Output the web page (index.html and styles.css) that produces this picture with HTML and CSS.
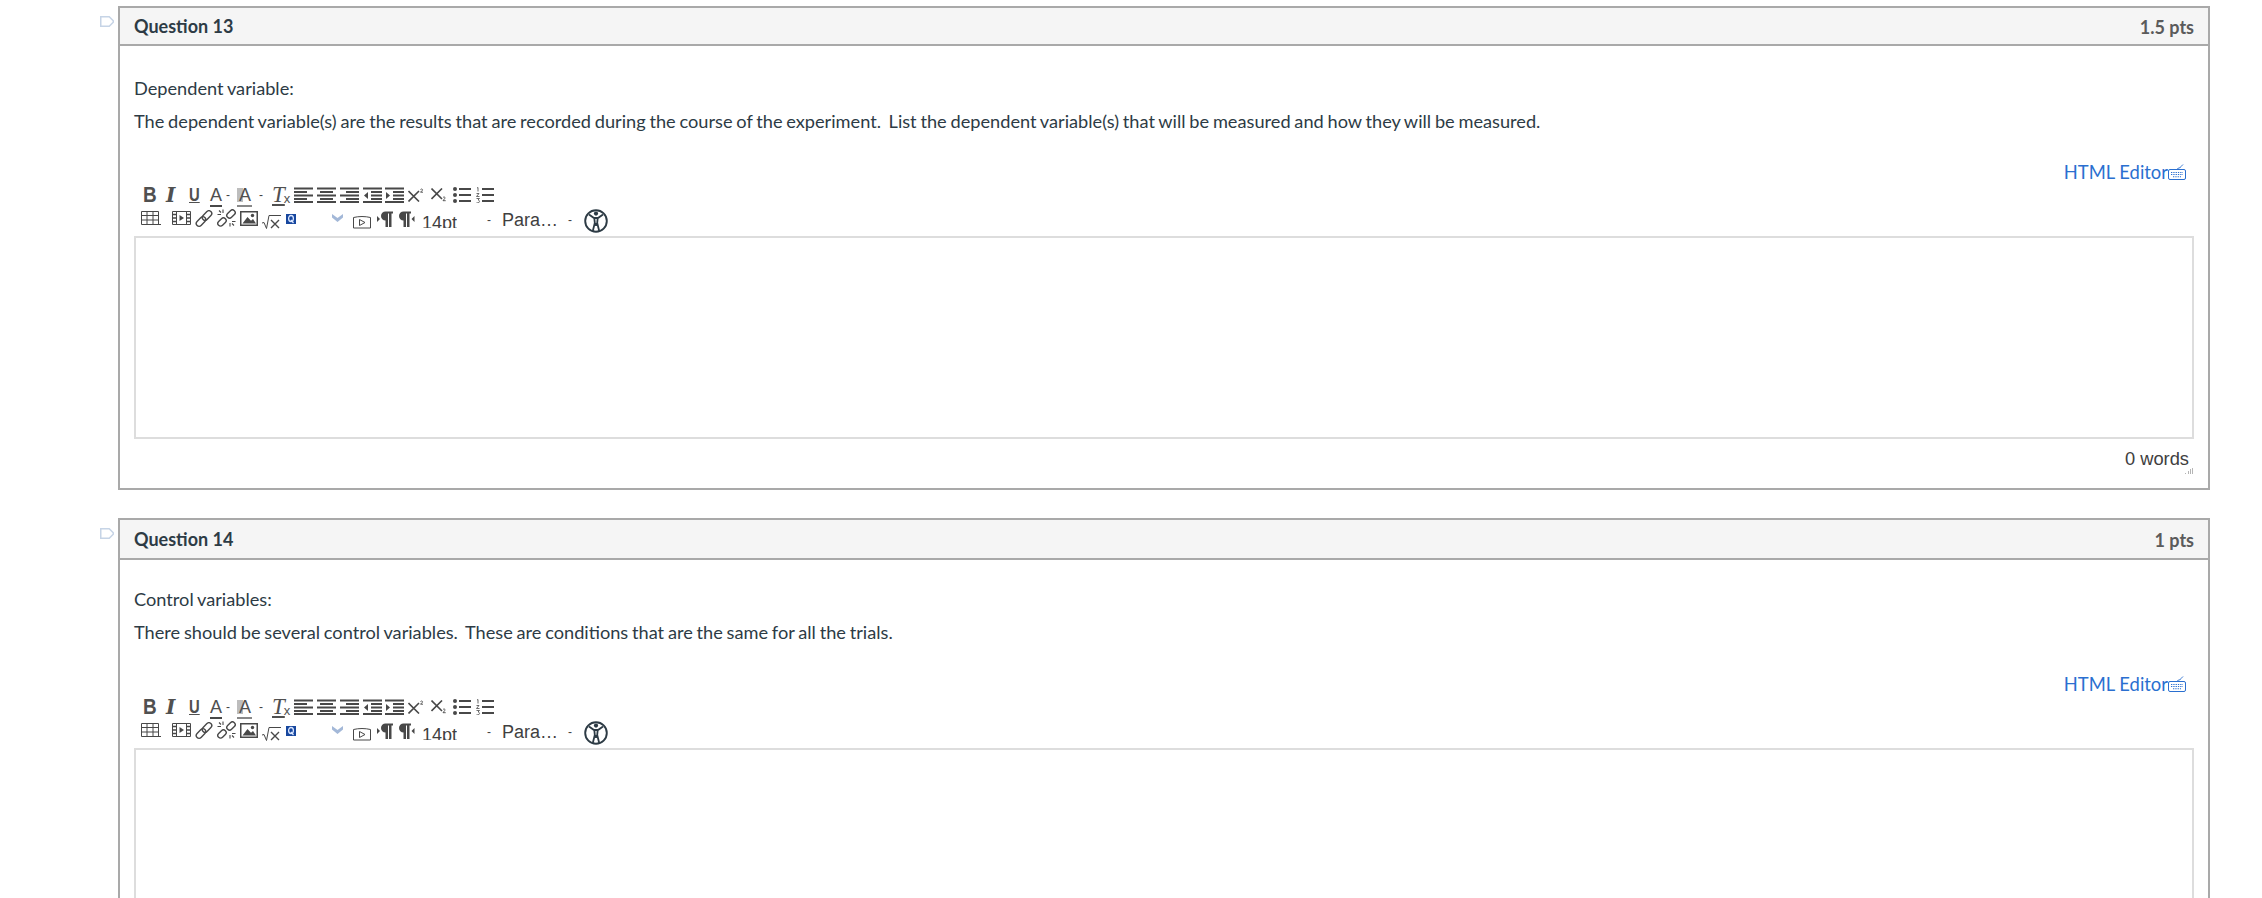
FILE: index.html
```html
<!DOCTYPE html>
<html lang="en">
<head>
<meta charset="utf-8">
<title>Quiz</title>
<link rel="stylesheet" href="styles.css">
</head>
<body>
<svg class="defs" width="0" height="0" aria-hidden="true">
  <symbol id="al" viewBox="0 0 19 16"><path d="M0 1.500h19M0 5h13M0 8.500h19M0 12h13M0 15h19" stroke="currentColor" stroke-width="2"/></symbol>
  <symbol id="ac" viewBox="0 0 19 16"><path d="M0 1.500h19M3 5h13M0 8.500h19M3 12h13M0 15h19" stroke="currentColor" stroke-width="2"/></symbol>
  <symbol id="ar" viewBox="0 0 19 16"><path d="M0 1.500h19M6 5h13M0 8.500h19M6 12h13M0 15h19" stroke="currentColor" stroke-width="2"/></symbol>
  <symbol id="od" viewBox="0 0 19 16"><path d="M0 1.500h19M8 5h11M8 8.500h11M8 12h11M0 15h19" stroke="currentColor" stroke-width="2"/><path d="M5 5v7L1 8.500z" fill="currentColor"/></symbol>
  <symbol id="id" viewBox="0 0 19 16"><path d="M0 1.500h19M8 5h11M8 8.500h11M8 12h11M0 15h19" stroke="currentColor" stroke-width="2"/><path d="M1 5v7l4-3.500z" fill="currentColor"/></symbol>
  <symbol id="sup" viewBox="0 0 16 14"><path d="M.500 3l10.500 10.500M11 3L.500 13.500" stroke="currentColor" stroke-width="1.600" fill="none"/><path d="M12.500 1.500c1-1 2.500-.3 1.900.8l-1.900 1.900h2.500" stroke="currentColor" stroke-width=".9" fill="none"/></symbol>
  <symbol id="sub" viewBox="0 0 16 14"><path d="M.500 .5l10.500 10.500M11 .5L.500 11" stroke="currentColor" stroke-width="1.600" fill="none"/><path d="M12 9.500c1-1 2.500-.3 1.900.8L12 12.700h2.700" stroke="currentColor" stroke-width=".9" fill="none"/></symbol>
  <symbol id="ul" viewBox="0 0 18 16"><circle cx="2" cy="2" r="2" fill="currentColor"/><circle cx="2" cy="8" r="2" fill="currentColor"/><circle cx="2" cy="14" r="2" fill="currentColor"/><path d="M6 2h12M6 8h12M6 14h12" stroke="currentColor" stroke-width="2"/></symbol>
  <symbol id="ol" viewBox="0 0 18 16"><path d="M6 2h12M6 8h12M6 14h12" stroke="currentColor" stroke-width="2"/><path d="M1 1l1-.5v4M.5 6.500h2.500l-2.500 3h3M.5 11.500h3l-1.500 1.500c2 0 2 3-.2 2.800h-1.300" stroke="currentColor" stroke-width=".8" fill="none"/></symbol>
  <symbol id="tb" viewBox="0 0 20 15"><path d="M.500 .500h17v13h-17zM.500 4.500h17M.500 9h17M6 .5v13M12 .5v13" stroke="currentColor" fill="none"/><path d="M17 13.500h3" stroke="currentColor"/></symbol>
  <symbol id="md" viewBox="0 0 19 14"><path d="M.500 .500h18v13H.500z" stroke="currentColor" fill="none"/><path d="M4.500 .5v13M14.500 .5v13" stroke="currentColor"/><path d="M7.500 4v6l4.500-3z" fill="currentColor"/><path d="M1 3.500h3M1 7h3M1 10.500h3M15 3.500h3M15 7h3M15 10.500h3" stroke="currentColor" stroke-width="1.500"/></symbol>
  <symbol id="lk" viewBox="0 0 18 17"><g fill="none" stroke="currentColor" stroke-width="1.400"><rect x="6.500" y="2.700" width="11" height="5.600" rx="2.800" transform="rotate(-45 12 5.500)"/><rect x=".5" y="8.700" width="11" height="5.600" rx="2.800" transform="rotate(-45 6 11.500)"/></g></symbol>
  <symbol id="un" viewBox="0 0 19 18"><g fill="none" stroke="currentColor" stroke-width="1.400"><rect x="9.250" y="2.250" width="9.500" height="5.500" rx="2.750" transform="rotate(-45 14 5)"/><rect x=".25" y="10.250" width="9.500" height="5.500" rx="2.750" transform="rotate(-45 5 13)"/><path d="M6 .5v3.500M13 14v3.500M.5 5.500h3.500M15 12.500h3.500M2 1.500l2 2M15 14.500l2 2" stroke-width="1.100"/></g></symbol>
  <symbol id="im" viewBox="0 0 18 15"><path d="M.750 .750h16.500v13.500H.750z" stroke="currentColor" stroke-width="1.500" fill="none"/><path d="M2.500 12.500l5-6.500 3.500 3.800 2-1.800 3 4.500z" fill="currentColor"/><circle cx="12.500" cy="4.500" r="1.700" fill="currentColor"/></symbol>
  <symbol id="sq" viewBox="0 0 19 14"><path d="M0 8l2 -.5 2.500 6L7 .5h12" stroke="currentColor" fill="none"/><path d="M9 5l8 8M17 5l-8 8" stroke="currentColor" stroke-width="1.400"/></symbol>
  <symbol id="qq" viewBox="0 0 10 10"><path d="M0 0h10v10H0z" fill="#17479e"/><ellipse cx="5" cy="4.500" rx="2.400" ry="3" fill="none" stroke="#dbe7ff" stroke-width="1.300"/><path d="M5 6l2.500 3" stroke="#dbe7ff" stroke-width="1.200"/></symbol>
  <symbol id="cv" viewBox="0 0 11 8"><path d="M0 0l5.500 4L11 0v3.500L5.500 8 0 3.500z" fill="#a3b8d8"/></symbol>
  <symbol id="pl" viewBox="0 0 18 13"><path d="M.500 1.500C6 .2 12 .2 17.500 1.500v10.500H.500z" stroke="currentColor" fill="none"/><path d="M6.500 3.500v6l5.500-3z" stroke="currentColor" fill="none"/></symbol>
  <symbol id="pr" viewBox="0 0 16 16"><path d="M0 5v6l3-3z" fill="currentColor"/><path d="M16 .5H8.500a4.500 4.500 0 0 0 0 9V16h2.500V2.500h1V16h2.500V2.500H16z" fill="currentColor"/></symbol>
  <symbol id="pt" viewBox="0 0 16 16"><path d="M12 .5H4.500a4.500 4.500 0 0 0 0 9V16H7V2.500h1V16h2.500V2.500H12z" fill="currentColor"/><path d="M15.500 5v6l-3-3z" fill="currentColor"/></symbol>
  <symbol id="a11" viewBox="0 0 24 24"><circle cx="12" cy="12" r="10.800" fill="none" stroke="#2d3b45" stroke-width="1.900"/><circle cx="12" cy="4.600" r="2.100" fill="#2d3b45"/><path d="M5 5.500l5 3.500h4l5-3.500M10.300 9l.5 5-2 8M13.700 9l-.5 5 2 8M12 14v3" fill="none" stroke="#2d3b45" stroke-width="1.800"/></symbol>
  <symbol id="kb" viewBox="0 0 18 16"><rect x=".5" y="5.500" width="17" height="10" rx="1.500" fill="none" stroke="currentColor"/><path d="M9 5.500c0-2 4-1 4-3l2-2" fill="none" stroke="currentColor" stroke-width=".9"/><path d="M3 8.500h12M3 10.500h12M5 12.800h8" stroke="currentColor" stroke-width="1.100" stroke-dasharray="1.300 1"/></symbol>
  <symbol id="fl" viewBox="0 0 14 11"><path d="M.750 .750h8.500l4 4v1.500l-4 4H.750z" fill="none" stroke="#c6d4e6" stroke-width="1.500"/></symbol>
  <symbol id="rz" viewBox="0 0 9 6"><path d="M0 5h1v1H0zM3 3h1v3H3zM5 1h1v5H5zM7 0h1v6H7z" fill="#b5b5b5"/></symbol>
</svg>

<section class="question first">
  <svg class="flag" width="14" height="11"><use href="#fl"/></svg>
  <header class="q-head">
    <h2 class="q-title">Question 13</h2>
    <span class="q-pts">1.5 pts</span>
  </header>
  <div class="q-body">
    <p class="q-text">Dependent variable:</p>
    <p class="q-text">The dependent variable(s) are the results that are recorded during the course of the experiment.&nbsp; List the dependent variable(s) that will be measured and how they will be measured.</p>
    <div class="html-link"><a class="link">HTML Editor</a><svg class="kb" width="18" height="16"><use href="#kb"/></svg></div>
    <div class="toolbar">
      <div class="tool-row">
        <span class="g g-b">B</span><span class="g g-i">I</span><span class="g g-u">U</span>
        <span class="g g-a">A</span><span class="caret c1">-</span><span class="g g-h">A</span><span class="caret c2">-</span>
        <span class="g g-t"><span class="g-tt">T</span><span class="g-x">x</span></span>
        <svg class="i19 m5" viewBox="0 0 19 16"><use href="#al"/></svg><svg class="i19 m4" viewBox="0 0 19 16"><use href="#ac"/></svg><svg class="i19 m4" viewBox="0 0 19 16"><use href="#ar"/></svg><svg class="i19 m4" viewBox="0 0 19 16"><use href="#od"/></svg><svg class="i19 m3" viewBox="0 0 19 16"><use href="#id"/></svg>
        <svg class="i16 m4" viewBox="0 0 16 14"><use href="#sup"/></svg><svg class="i16 m7" viewBox="0 0 16 14"><use href="#sub"/></svg>
        <svg class="i18 m6" viewBox="0 0 18 16"><use href="#ul"/></svg><svg class="i18 m5" viewBox="0 0 18 16"><use href="#ol"/></svg>
      </div>
      <div class="tool-row">
        <svg class="tb" viewBox="0 0 20 15"><use href="#tb"/></svg>
        <svg class="md" viewBox="0 0 19 14"><use href="#md"/></svg>
        <svg class="lk" viewBox="0 0 18 17"><use href="#lk"/></svg>
        <svg class="un" viewBox="0 0 19 18"><use href="#un"/></svg>
        <svg class="im" viewBox="0 0 18 15"><use href="#im"/></svg>
        <svg class="sq" viewBox="0 0 19 14"><use href="#sq"/></svg>
        <svg class="qq" viewBox="0 0 10 10"><use href="#qq"/></svg>
        <svg class="cv" viewBox="0 0 11 8"><use href="#cv"/></svg>
        <svg class="pl" viewBox="0 0 18 13"><use href="#pl"/></svg>
        <svg class="pr" viewBox="0 0 16 16"><use href="#pr"/></svg>
        <svg class="pt" viewBox="0 0 16 16"><use href="#pt"/></svg>
        <span class="sel sel-size">14pt</span><span class="caret c3">-</span>
        <span class="sel sel-para">Para…</span><span class="caret c4">-</span>
        <svg class="a11" viewBox="0 0 24 24"><use href="#a11"/></svg>
      </div>
    </div>
    <div class="editor"></div>
    <div class="status"><span>0 words</span><svg class="rz" width="9" height="6"><use href="#rz"/></svg></div>
  </div>
</section>

<section class="question second">
  <svg class="flag" width="14" height="11"><use href="#fl"/></svg>
  <header class="q-head">
    <h2 class="q-title">Question 14</h2>
    <span class="q-pts">1 pts</span>
  </header>
  <div class="q-body">
    <p class="q-text">Control variables:</p>
    <p class="q-text">There should be several control variables.&nbsp; These are conditions that are the same for all the trials.</p>
    <div class="html-link"><a class="link">HTML Editor</a><svg class="kb" width="18" height="16"><use href="#kb"/></svg></div>
    <div class="toolbar">
      <div class="tool-row">
        <span class="g g-b">B</span><span class="g g-i">I</span><span class="g g-u">U</span>
        <span class="g g-a">A</span><span class="caret c1">-</span><span class="g g-h">A</span><span class="caret c2">-</span>
        <span class="g g-t"><span class="g-tt">T</span><span class="g-x">x</span></span>
        <svg class="i19 m5" viewBox="0 0 19 16"><use href="#al"/></svg><svg class="i19 m4" viewBox="0 0 19 16"><use href="#ac"/></svg><svg class="i19 m4" viewBox="0 0 19 16"><use href="#ar"/></svg><svg class="i19 m4" viewBox="0 0 19 16"><use href="#od"/></svg><svg class="i19 m3" viewBox="0 0 19 16"><use href="#id"/></svg>
        <svg class="i16 m4" viewBox="0 0 16 14"><use href="#sup"/></svg><svg class="i16 m7" viewBox="0 0 16 14"><use href="#sub"/></svg>
        <svg class="i18 m6" viewBox="0 0 18 16"><use href="#ul"/></svg><svg class="i18 m5" viewBox="0 0 18 16"><use href="#ol"/></svg>
      </div>
      <div class="tool-row">
        <svg class="tb" viewBox="0 0 20 15"><use href="#tb"/></svg>
        <svg class="md" viewBox="0 0 19 14"><use href="#md"/></svg>
        <svg class="lk" viewBox="0 0 18 17"><use href="#lk"/></svg>
        <svg class="un" viewBox="0 0 19 18"><use href="#un"/></svg>
        <svg class="im" viewBox="0 0 18 15"><use href="#im"/></svg>
        <svg class="sq" viewBox="0 0 19 14"><use href="#sq"/></svg>
        <svg class="qq" viewBox="0 0 10 10"><use href="#qq"/></svg>
        <svg class="cv" viewBox="0 0 11 8"><use href="#cv"/></svg>
        <svg class="pl" viewBox="0 0 18 13"><use href="#pl"/></svg>
        <svg class="pr" viewBox="0 0 16 16"><use href="#pr"/></svg>
        <svg class="pt" viewBox="0 0 16 16"><use href="#pt"/></svg>
        <span class="sel sel-size">14pt</span><span class="caret c3">-</span>
        <span class="sel sel-para">Para…</span><span class="caret c4">-</span>
        <svg class="a11" viewBox="0 0 24 24"><use href="#a11"/></svg>
      </div>
    </div>
    <div class="editor"></div>
  </div>
</section>
</body>
</html>
```

FILE: styles.css
```css
html, body { margin: 0; padding: 0; height: 898px; overflow: hidden; background: #fff; }
body { padding-top: 6px; box-sizing: border-box; font-family: Lato, sans-serif; color: #2d3b45; }
.defs { position: absolute; }

.question { position: relative; width: 2092px; margin-left: 118px; box-sizing: border-box; border: 2px solid #a9a9a9; }
.second { margin-top: 28px; }
.flag { position: absolute; left: -20px; top: 8px; }

.q-head { display: flex; justify-content: space-between; align-items: center; height: 36px; padding: 0 14px 0 14px; background: #f5f5f5; border-bottom: 2px solid #a9a9a9; }
.second .q-head { height: 38px; }
.q-title { margin: 0; font-size: 18px; line-height: 24px; font-weight: 700; }
.q-pts { font-size: 18px; font-weight: 700; color: #5b5b5b; line-height: 24px; position: relative; top: 1px; }

.q-body { padding: 30px 14px 0 14px; }
.second .q-body { padding-top: 27px; }
.q-text { margin: 0 0 9px; font-size: 18.2px; line-height: 24px; word-spacing: -.88px; }

.html-link { display: flex; justify-content: flex-end; align-items: center; height: 20px; margin-top: 29px; padding-right: 8px; }
.second .html-link { margin-top: 30px; }
.link { font-size: 18.4px; color: #2a6fd0; line-height: 20px; }
.kb { color: #2a6fd0; }

.toolbar { margin-bottom: 4px; color: #484848; height: 50px; }
.tool-row { display: flex; align-items: center; height: 25px; }
svg { display: block; flex: none; }

.g { font-family: "Liberation Sans", sans-serif; display: block; flex: none; line-height: 20px; color: #505050; }
.g-b { width: 12px; margin-left: 9px; font-size: 22px; font-weight: 700; transform: scaleX(.86); transform-origin: left; }
.g-i { width: 13px; margin-left: 11px; font-family: "DejaVu Serif", serif; font-style: italic; font-size: 20px; font-weight: 700; }
.g-u { width: 11px; margin-left: 10px; font-size: 19px; font-weight: 700; transform: scaleX(.78); transform-origin: left; text-decoration: underline; }
.g-a, .g-h { font-size: 18px; height: 20px; margin-top: 2px; border-bottom: 2px solid #484848; }
.g-a { width: 12px; margin-left: 10px; }
.g-h { width: 13px; margin-left: 0; background: linear-gradient(#bdbdbd, #bdbdbd) no-repeat 0 3px / 6px 14px; padding-left: 2px; border-bottom-color: #888; }
.g-t { display: flex; align-items: flex-end; width: 17px; height: 20px; margin-left: 9px; }
.g-tt { font-family: "Liberation Serif", serif; font-style: italic; font-size: 23px; line-height: 20px; text-decoration: underline; }
.g-x { font-family: "Liberation Sans", sans-serif; font-size: 13px; line-height: 12px; margin-left: -1px; }

.caret { flex: none; font-family: "Liberation Sans", sans-serif; font-size: 12px; color: #424242; width: 4px; }
.c1 { margin-left: 4px; margin-right: 7px; }
.c2 { margin-left: 7px; }
.c3 { margin-left: 30px; }
.c4 { margin-left: 12px; }

.i19 { width: 19px; height: 16px; }
.i16 { width: 16px; height: 14px; }
.i18 { width: 18px; height: 16px; }
.m3 { margin-left: 3px; }
.m4 { margin-left: 4px; }
.m5 { margin-left: 5px; }
.m6 { margin-left: 6px; }
.m7 { margin-left: 7px; }

.tb { width: 20px; height: 15px; margin-left: 7px; margin-top: -3px; }
.md { width: 19px; height: 14px; margin-left: 11px; margin-top: -3px; }
.lk { width: 18px; height: 17px; margin-left: 4px; margin-top: -3px; }
.un { width: 19px; height: 18px; margin-left: 4px; margin-top: -3px; }
.im { width: 18px; height: 15px; margin-left: 4px; margin-top: -3px; }
.sq { width: 19px; height: 14px; margin-left: 4px; margin-top: 5px; }
.qq { width: 10px; height: 10px; margin-left: 5px; margin-top: -1px; }
.cv { width: 11px; height: 8px; margin-left: 36px; margin-top: -3px; }
.pl { width: 18px; height: 13px; margin-left: 10px; margin-top: 5px; }
.pr { width: 16px; height: 16px; margin-left: 6px; margin-top: -1px; }
.pt { width: 16px; height: 16px; margin-left: 6px; margin-top: -1px; }
.sel { flex: none; font-family: "Liberation Sans", sans-serif; font-size: 18px; color: #404040; line-height: 20px; }
.sel-size { height: 15px; overflow: hidden; margin-left: 7px; margin-top: 2px; }
.sel-para { margin-left: 11px; margin-top: 1px; width: 54px; }
.a11 { width: 24px; height: 24px; margin-left: 12px; margin-top: 2px; }

.editor { height: 199px; border: 2px solid #dddddd; }
.status { position: relative; height: 40px; padding: 9px 5px 0 0; display: flex; justify-content: flex-end; font-family: "Liberation Sans", sans-serif; font-size: 18.3px; line-height: 21px; color: #404040; }
.rz { position: absolute; right: 0; bottom: 14px; }
```
